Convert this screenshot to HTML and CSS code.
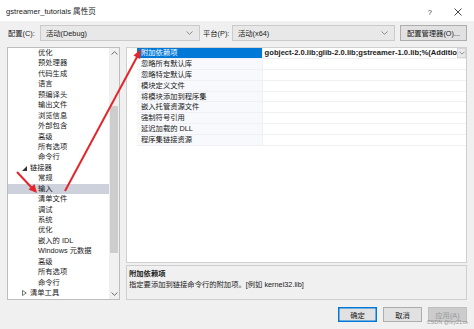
FILE: index.html
```html
<!DOCTYPE html>
<html lang="zh-CN">
<head>
    <meta charset="UTF-8">
    <title>gstreamer_tutorials 属性页</title>
    <link rel="stylesheet" href="styles.css">
</head>
<body>

    <!-- Barra de título -->
    <div class="titlebar">
        <span class="title">gstreamer_tutorials 属性页</span>
        <span class="tb-icons">
            <span class="tb-help">?</span>
            <svg class="tb-close" width="8" height="8" viewBox="0 0 8 8"><path d="M0.5 0.5L7.5 7.5M7.5 0.5L0.5 7.5" stroke="#333" stroke-width="0.9"/></svg>
        </span>
    </div>

    <!-- Configuração / plataforma -->
    <div class="config">
        <span class="config-label">配置(C):</span>
        <div class="combo combo-config">
            <span>活动(Debug)</span>
            <svg width="7" height="4" viewBox="0 0 7 4"><path d="M0.5 0.5L3.5 3.3L6.5 0.5" fill="none" stroke="#777" stroke-width="0.8"/></svg>
        </div>
        <span class="config-label platform-label">平台(P):</span>
        <div class="combo combo-platform">
            <span>活动(x64)</span>
            <svg width="7" height="4" viewBox="0 0 7 4"><path d="M0.5 0.5L3.5 3.3L6.5 0.5" fill="none" stroke="#777" stroke-width="0.8"/></svg>
        </div>
        <button class="btn btn-manager">配置管理器(O)...</button>
    </div>

    <div class="main">
        <!-- Árvore da esquerda -->
        <div class="tree">
            <ul class="tree-list">
                <li class="sub">优化</li>
                <li class="sub">预处理器</li>
                <li class="sub">代码生成</li>
                <li class="sub">语言</li>
                <li class="sub">预编译头</li>
                <li class="sub">输出文件</li>
                <li class="sub">浏览信息</li>
                <li class="sub">外部包含</li>
                <li class="sub">高级</li>
                <li class="sub">所有选项</li>
                <li class="sub">命令行</li>
                <li class="group"><svg class="caret" width="5" height="5" viewBox="0 0 5 5"><path d="M5 0L5 5L0 5Z" fill="#333"/></svg>链接器</li>
                <li class="sub">常规</li>
                <li class="sub selected">输入</li>
                <li class="sub">清单文件</li>
                <li class="sub">调试</li>
                <li class="sub">系统</li>
                <li class="sub">优化</li>
                <li class="sub">嵌入的 IDL</li>
                <li class="sub">Windows 元数据</li>
                <li class="sub">高级</li>
                <li class="sub">所有选项</li>
                <li class="sub">命令行</li>
                <li class="group"><svg class="caret" width="5" height="6" viewBox="0 0 5 6"><path d="M0.5 0.5L4.3 3L0.5 5.5Z" fill="none" stroke="#555" stroke-width="0.8"/></svg>清单工具</li>
            </ul>
            <div class="vscroll">
                <svg class="scroll-arrow" width="7" height="4" viewBox="0 0 7 4"><path d="M0.5 3.5L3.5 0.7L6.5 3.5" fill="none" stroke="#606060" stroke-width="0.9"/></svg>
                <div class="scroll-track"><div class="scroll-thumb"></div></div>
                <svg class="scroll-arrow" width="7" height="4" viewBox="0 0 7 4"><path d="M0.5 0.5L3.5 3.3L6.5 0.5" fill="none" stroke="#606060" stroke-width="0.9"/></svg>
            </div>
        </div>

        <div class="right">
            <!-- Grade de propriedades -->
            <div class="grid">
                <div class="row">
                    <span class="name selected">附加依赖项</span>
                    <span class="value">gobject-2.0.lib;glib-2.0.lib;gstreamer-1.0.lib;%(Additio</span>
                    <span class="drop"><svg width="6" height="4" viewBox="0 0 6 4"><path d="M0.5 0.7L3 3.2L5.5 0.7" fill="none" stroke="#777" stroke-width="0.8"/></svg></span>
                </div>
                <div class="row"><span class="name">忽略所有默认库</span><span class="value"></span></div>
                <div class="row"><span class="name">忽略特定默认库</span><span class="value"></span></div>
                <div class="row"><span class="name">模块定义文件</span><span class="value"></span></div>
                <div class="row"><span class="name">将模块添加到程序集</span><span class="value"></span></div>
                <div class="row"><span class="name">嵌入托管资源文件</span><span class="value"></span></div>
                <div class="row"><span class="name">强制符号引用</span><span class="value"></span></div>
                <div class="row"><span class="name">延迟加载的 DLL</span><span class="value"></span></div>
                <div class="row"><span class="name">程序集链接资源</span><span class="value"></span></div>
            </div>

            <div class="desc">
                <div class="desc-title">附加依赖项</div>
                <div class="desc-text">指定要添加到链接命令行的附加项。[例如 kernel32.lib]</div>
            </div>
        </div>
    </div>

    <div class="footer">
        <button class="btn btn-default">确定</button>
        <button class="btn">取消</button>
        <button class="btn btn-disabled">应用(A)</button>
    </div>

    <!-- Setas vermelhas desenhadas por cima -->
    <svg class="arrows" width="474" height="329" viewBox="0 0 474 329">
        <path d="M65 191L137.5 56" stroke="#e3262b" stroke-width="2" fill="none"/>
        <path d="M141 49L133.5 55.5L140 59Z" fill="#e3262b"/>
        <path d="M17 172L32 188" stroke="#e3262b" stroke-width="2" fill="none"/>
        <path d="M37 193L28.5 189.5L34.5 184Z" fill="#e3262b"/>
    </svg>

    <div class="watermark">CSDN @lxy21xe</div>

</body>
</html>
```

FILE: styles.css
```css
body {
    margin: 0;
    width: 474px;
    height: 329px;
    overflow: hidden;
    position: relative;
    background-color: #f0f0f0;
    font-family: "Liberation Sans", "Noto Sans CJK SC", sans-serif;
    font-size: 7.3px;
    color: #1a1a1a;
}

ul {
    margin: 0;
    padding: 0;
    list-style: none;
}

/* Barra de título */
.titlebar {
    height: 21px;
    background-color: #fff;
    display: flex;
    justify-content: space-between;
    padding: 0 12px 0 6px;
}

.title {
    margin-top: 5px;
    font-size: 7.6px;
    color: #222;
}

.tb-icons {
    display: flex;
    align-items: center;
    gap: 22px;
    margin-top: 3px;
}

.tb-help {
    font-size: 7.5px;
    color: #444;
}

/* Linha de configuração */
.config {
    display: flex;
    align-items: center;
    height: 18px;
    margin-top: 3px;
    padding-left: 8px;
}

.config-label {
    width: 32px;
}

.platform-label {
    width: 29px;
    margin-left: 3px;
}

.combo {
    height: 16px;
    box-sizing: border-box;
    border: 1px solid #cacaca;
    background-color: #e8e8e8;
    display: flex;
    align-items: center;
    justify-content: space-between;
    padding: 0 6px 0 5px;
}

.combo-config {
    width: 160px;
}

.combo-platform {
    width: 163px;
}

.btn {
    font-family: inherit;
    font-size: 7.3px;
    color: #1a1a1a;
    background-color: #e1e1e1;
    border: 1px solid #adadad;
    padding: 0;
    height: 15px;
    width: 39px;
}

.btn-manager {
    width: 67px;
    height: 16px;
    margin-left: 5px;
}

/* Área principal */
.main {
    display: flex;
    gap: 6px;
    height: 253px;
    margin-top: 5px;
    padding-left: 7px;
}

.tree {
    width: 113px;
    box-sizing: border-box;
    border: 1px solid #bdbdbd;
    background-color: #fff;
    display: flex;
    overflow: hidden;
}

.tree-list {
    flex: 1;
    overflow: hidden;
}

.tree-list li {
    height: 10.45px;
    line-height: 10.45px;
    white-space: nowrap;
    display: flex;
    align-items: center;
}

.tree-list .sub {
    padding-left: 30px;
}

.tree-list .group {
    padding-left: 14px;
}

.caret {
    margin-right: 3px;
}

.tree-list .selected {
    background-color: #cdd1db;
}

.vscroll {
    width: 10px;
    background-color: #f0f0f0;
    display: flex;
    flex-direction: column;
    align-items: center;
}

.scroll-arrow {
    margin: 3px 0;
}

.scroll-track {
    flex: 1;
    width: 100%;
    padding-top: 48px;
    box-sizing: border-box;
}

.scroll-thumb {
    height: 147px;
    margin: 0 1px;
    background-color: #cdcdcd;
}

.right {
    width: 341px;
    display: flex;
    flex-direction: column;
    gap: 2px;
}

/* Grade de propriedades */
.grid {
    height: 216px;
    box-sizing: border-box;
    border: 1px solid #cfcfcf;
    background-color: #fff;
    padding-left: 10px;
}

.row {
    height: 10.9px;
    display: flex;
    background-color: #f8f9fc;
    border-bottom: 0.5px solid #eef0f3;
    box-sizing: border-box;
}

.name {
    width: 126px;
    line-height: 10.9px;
    padding-left: 4px;
    box-sizing: border-box;
    border-right: 1px solid #eef0f3;
}

.name.selected {
    background-color: #0078d7;
    color: #fff;
}

.value {
    flex: 1;
    line-height: 10.9px;
    padding-left: 2px;
    font-size: 7.6px;
    font-weight: bold;
    white-space: nowrap;
    background-color: #fff;
}

.drop {
    width: 9px;
    box-sizing: border-box;
    border: 1px solid #d5d5d5;
    background-color: #eaeaea;
    display: flex;
    align-items: center;
    justify-content: center;
}

/* Descrição */
.desc {
    height: 35px;
    box-sizing: border-box;
    border: 1px solid #cfcfcf;
    padding: 2px 2px;
}

.desc-title {
    font-weight: bold;
    line-height: 11px;
}

.desc-text {
    line-height: 11px;
}

/* Botões de baixo */
.footer {
    display: flex;
    justify-content: flex-end;
    gap: 6px;
    margin-top: 7px;
    padding-right: 7px;
}

.btn-default {
    border-color: #0078d7;
    box-shadow: inset 0 0 0 0.5px #0078d7;
}

.btn-disabled {
    background-color: #cccccc;
    border-color: #bfbfbf;
    color: #9a9a9a;
}

.arrows {
    position: absolute;
    top: 0;
    left: 0;
    pointer-events: none;
}

.watermark {
    position: absolute;
    right: 6px;
    bottom: 4px;
    font-size: 5.5px;
    color: rgba(110, 110, 110, 0.7);
}
```
